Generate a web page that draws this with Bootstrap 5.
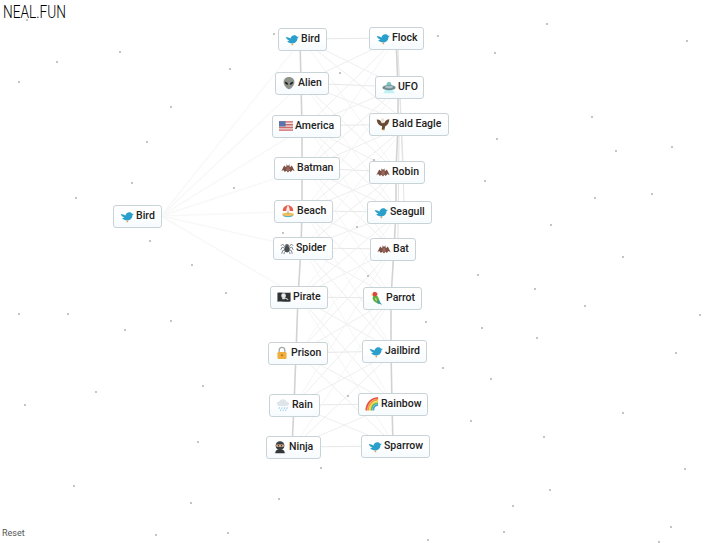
<!DOCTYPE html>
<html lang="en">
<head>
    <meta charset="UTF-8">
    <title>Infinite Craft</title>
    <link href="https://cdn.jsdelivr.net/npm/bootstrap@5.3.3/dist/css/bootstrap.min.css" rel="stylesheet">
    <style>
        body {
            background-color: #fff;
            font-family: Roboto, "Liberation Sans", sans-serif;
        }

        .craft-board {
            width: 720px;
            height: 543px;
            overflow: hidden;
        }

        .craft-lines {
            left: 0;
            top: 0;
        }

        .site-logo {
            left: 3px;
            top: -2px;
            font-size: 19px;
            font-weight: 300;
            color: #000;
            transform: scaleX(.72);
            transform-origin: left top;
        }

        .reset-link {
            left: 2px;
            bottom: 3px;
            font-size: 9px;
            color: #555;
        }

        .craft-node {
            height: 23px;
            padding: 0 0 1px 6px;
            gap: 2px;
            font-size: 10.5px;
            font-weight: 500;
            color: #222;
            white-space: nowrap;
            background: linear-gradient(180deg, #fff 40%, #f6fbfe 100%);
            border: 1px solid #c8d3d7;
            border-radius: 3px;
        }

        .craft-node svg {
            width: 14px;
            height: 14px;
            flex: none;
        }
    </style>
</head>
<body>

<!-- emoji drawn by hand, no emoji font in the sandbox -->
<svg width="0" height="0" class="position-absolute">
    <symbol id="e-bird" viewBox="0 0 16 16">
        <path d="M.8 5.800c2.200.2 4 .8 5.500 1.700.3-2.200 2.100-3.800 4.200-3.800 1.400 0 2.500.6 3.200 1.600l2.300.1-1.800 1.600c0 3.600-2.700 6-6.200 6-2.300 0-4.300-.9-5.500-2.400l2.500-.6C3.100 9.300 1.500 7.800.8 5.800z" fill="#2a9fcc"/>
        <path d="M7.800 13.300l-.4 1.900h2l-.3-1.900z" fill="#e3a33f"/>
    </symbol>
    <symbol id="e-alien" viewBox="0 0 16 16">
        <path d="M8 1C4.200 1 1.800 3.500 1.800 6.800 1.800 10.500 5.500 15 8 15s6.200-4.500 6.200-8.200C14.200 3.500 11.800 1 8 1z" fill="#8f938c"/>
        <path d="M3.300 6.600c2 0 3.700 1.300 3.800 3.300-2.100.2-3.900-1.100-3.800-3.300zM12.700 6.600c-2 0-3.700 1.300-3.800 3.300 2.100.2 3.900-1.100 3.800-3.300z" fill="#1f2320"/>
    </symbol>
    <symbol id="e-ufo" viewBox="0 0 16 16">
        <path d="M4 11l-2.500 4h13L12 11z" fill="#bff0f2"/>
        <path d="M5 6.500C5 3.500 6.500 2 8 2s3 1.500 3 4.500z" fill="#7fc4c4"/>
        <ellipse cx="8" cy="8.800" rx="7.500" ry="3" fill="#6f8d92"/>
        <ellipse cx="8" cy="8" rx="4.500" ry="1.500" fill="#a8c4c6"/>
    </symbol>
    <symbol id="e-flag" viewBox="0 0 16 16">
        <rect y="2.500" width="16" height="11" fill="#f0dedd"/>
        <path d="M0 2.500h16v1.600H0zM0 5.700h16v1.600H0zM0 8.900h16v1.600H0zM0 12h16v1.500H0z" fill="#cf6a68"/>
        <rect y="2.500" width="7.500" height="6" fill="#5a74ad"/>
    </symbol>
    <symbol id="e-eagle" viewBox="0 0 16 16">
        <path d="M.8 3c2.700-.2 4.700 1.300 5.500 3.500h3.400c.9-2.400 2.900-4 5.500-4-.1 3.800-1.700 6.800-4.700 8L9.500 15l-3-.5.500-4C3.500 10 1.300 7 .8 3z" fill="#6b4a34"/>
        <path d="M5.800 3.500c0-1.400 1.100-2.200 2.300-1.900 1 .2 1.300 1 1.100 1.800l1.100.7-1.300.1-.3 2.600-2.100.2z" fill="#e9e3d6"/>
        <path d="M6.500 14.500l2.500.8.500-1.500z" fill="#e0a63a"/>
    </symbol>
    <symbol id="e-bat" viewBox="0 0 16 16">
        <path d="M.4 11.800L3.600 5l2.200 2 .8-3.200 1 1.500h.8l1-1.500.8 3.200L12.400 5l3.200 6.800-2.500-1.500-1.900 2.300-1.700-1.600L8 13.200l-1.900-2.200-1.700 1.600-1.900-2.300z" fill="#7d5046"/>
        <path d="M6.500 6.500h3l.5 4L8 12.500l-2-2z" fill="#96695d"/>
    </symbol>
    <symbol id="e-beach" viewBox="0 0 16 16">
        <path d="M1.500 11C3 9.500 13 9.500 14.500 11c.5 2.500-1.500 3.800-6.500 3.800S1 13.500 1.500 11z" fill="#f0c060"/>
        <path d="M2 12.500c3 1.500 9 1.500 12 0-.6 1.500-2.500 2.300-6 2.300S2.600 14 2 12.500z" fill="#4fb5d8"/>
        <path d="M2 8C2 4 5 1.500 8 1.500S14 4 14 8z" fill="#e85c4f"/>
        <path d="M6 8c0-3 1-5 2-6.500C9 3 10 5 10 8z" fill="#f6efe8"/>
        <path d="M7.600 8h.8v3h-.8z" fill="#9a7a58"/>
    </symbol>
    <symbol id="e-spider" viewBox="0 0 16 16">
        <g stroke="#6a7074" stroke-width="1" fill="none">
            <path d="M6 7L3 3.500 1 5.500M6 8.500L2.500 7 1 10M6 10l-3 1-1 3.500M7 11l-2 2-.5 2M10 7l3-3.500 2 2M10 8.500L13.500 7 15 10M10 10l3 1 1 3.500M9 11l2 2 .5 2"/>
        </g>
        <circle cx="8" cy="5.500" r="2.200" fill="#5a5f64"/>
        <ellipse cx="8" cy="9.500" rx="3" ry="3.500" fill="#474c50"/>
    </symbol>
    <symbol id="e-pirate" viewBox="0 0 16 16">
        <path d="M.5 3c5-.8 10 .6 15-.2v10.400c-5 .8-10-.6-15 .2z" fill="#2f3336"/>
        <circle cx="7.500" cy="6.500" r="2.700" fill="#e8e8e8"/>
        <path d="M6 8.500h3v2H6zM9.500 8.500l3.500 2-.5 1-3.500-2z" fill="#e8e8e8"/>
    </symbol>
    <symbol id="e-parrot" viewBox="0 0 16 16">
        <path d="M3.500 6c2-2 5-1 6 1.500l2.500 6-2 1.500-5-3C3 10.500 2.500 7.500 3.500 6z" fill="#55b348"/>
        <path d="M2.800 4c0-2 1.500-3.200 3.200-3 1.700.2 2.800 1.600 2.500 3.500L6.300 6.200C4.800 6 2.800 5.700 2.800 4z" fill="#d8473c"/>
        <path d="M3 3L1.300 4.500l1.900 1.200z" fill="#e9b23f"/>
        <path d="M8.500 9l3 4.500 2 1.300-.5 1-4.500-2.800z" fill="#3c8fc2"/>
        <path d="M6 7.500c1.200 1 2 2.500 2.300 4.300L5.800 10z" fill="#e6d24a"/>
    </symbol>
    <symbol id="e-lock" viewBox="0 0 16 16">
        <path d="M4.800 7V4.800C4.800 3 6.200 1.500 8 1.500s3.200 1.500 3.200 3.300V7" fill="none" stroke="#a3a8ab" stroke-width="1.500"/>
        <rect x="2.800" y="6.800" width="10.400" height="8" rx="1.500" fill="#f2ae3a"/>
        <circle cx="8" cy="10.500" r="1.100" fill="#a8701c"/>
    </symbol>
    <symbol id="e-rain" viewBox="0 0 16 16">
        <path d="M4 9C2.300 9 1 8 1 6.500S2.300 4 3.800 4C4.500 2.500 6 1.500 8 1.500c2.200 0 3.800 1.300 4.200 2.800C13.800 4.300 15 5.300 15 6.700S13.800 9 12 9z" fill="#dfe5ea"/>
        <path d="M4 10.500l-.6 2M7 10.500l-.6 2M10 10.500l-.6 2M13 10.500l-.6 2M5.500 13l-.5 2M8.500 13l-.5 2M11.500 13l-.5 2" stroke="#8fc7e6" stroke-width="1" fill="none"/>
    </symbol>
    <symbol id="e-ninja" viewBox="0 0 16 16">
        <path d="M2.500 15c0-3 2-4.500 5.500-4.500s5.500 1.500 5.500 4.500z" fill="#33373a"/>
        <circle cx="8" cy="6.500" r="5" fill="#3a3e41"/>
        <rect x="3.600" y="5" width="8.800" height="2.600" rx="1" fill="#e2b48c"/>
        <circle cx="6.300" cy="6.300" r=".7" fill="#222"/>
        <circle cx="9.700" cy="6.300" r=".7" fill="#222"/>
    </symbol>
    <symbol id="e-rainbow" viewBox="0 0 16 16">
        <g fill="none" stroke-width="2">
            <path d="M1.500 15.500C1.500 8 6.500 1.500 15 1" stroke="#e9534a"/>
            <path d="M3.500 15.500C3.500 9 8 3.300 15 3" stroke="#f29a38"/>
            <path d="M5.500 15.500C5.500 10 9 5.300 15 5" stroke="#f5d54a"/>
            <path d="M7.500 15.500C7.500 11 10 7.300 15 7" stroke="#5fbf5a"/>
            <path d="M9.500 15.500C9.500 12 11 9.300 15 9" stroke="#4a9fe0"/>
        </g>
    </symbol>
</svg>

<div class="craft-board position-relative" id="board">
    <svg class="craft-lines position-absolute" id="lines" width="720" height="543"></svg>
    <div class="site-logo position-absolute">NEAL.FUN</div>
    <div class="reset-link position-absolute">Reset</div>
</div>

<script src="https://cdn.jsdelivr.net/npm/bootstrap@5.3.3/dist/js/bootstrap.bundle.min.js"></script>
<script>
    // name, icon, x, y, width, x of the line running down the column
    const leftCol = [
        ['Bird', 'bird', 278, 28, 49, 300],
        ['Alien', 'alien', 275, 72, 54, 301],
        ['America', 'flag', 272, 115, 69, 302],
        ['Batman', 'bat', 274, 157, 66, 302],
        ['Beach', 'beach', 274, 200, 59, 302],
        ['Spider', 'spider', 273, 237, 60, 301],
        ['Pirate', 'pirate', 270, 286, 58, 298],
        ['Prison', 'lock', 268, 342, 60, 296],
        ['Rain', 'rain', 269, 394, 51, 294],
        ['Ninja', 'ninja', 266, 436, 55, 292]
    ];
    const rightCol = [
        ['Flock', 'bird', 369, 27, 55, 396],
        ['UFO', 'ufo', 375, 76, 49, 398],
        ['Bald Eagle', 'eagle', 369, 113, 80, 398],
        ['Robin', 'bat', 369, 161, 56, 396],
        ['Seagull', 'bird', 367, 201, 65, 396],
        ['Bat', 'bat', 370, 238, 46, 394],
        ['Parrot', 'parrot', 363, 287, 59, 391],
        ['Jailbird', 'bird', 362, 340, 65, 391],
        ['Rainbow', 'rainbow', 358, 393, 70, 392],
        ['Sparrow', 'bird', 361, 435, 69, 393]
    ];
    const farBird = ['Bird', 'bird', 113, 205, 49];

    const stars = [
        [27,20],[120,52],[57,62],[19,82],[230,69],[171,107],[147,142],[132,183],[234,188],[76,198],
        [150,241],[192,265],[226,293],[19,314],[68,314],[125,330],[171,321],[203,386],[96,392],[25,405],
        [198,442],[74,486],[191,503],[156,535],[228,533],[547,24],[495,53],[687,41],[592,117],[497,139],
        [616,151],[672,147],[485,181],[595,198],[652,194],[551,225],[623,257],[478,275],[535,289],[585,306],
        [700,315],[482,328],[537,338],[676,353],[443,368],[491,379],[623,413],[471,421],[544,437],[685,469],
        [550,490],[513,506],[504,532],[671,527],[659,542],[321,468],[279,499],[428,540],[274,34],[438,36],
        [340,73],[374,160],[357,227],[368,276],[283,233],[426,322],[348,396]
    ];

    const board = document.getElementById('board');
    const lines = document.getElementById('lines');
    const NS = 'http://www.w3.org/2000/svg';

    function addLine(x1, y1, x2, y2, color, width) {
        const l = document.createElementNS(NS, 'line');
        l.setAttribute('x1', x1);
        l.setAttribute('y1', y1);
        l.setAttribute('x2', x2);
        l.setAttribute('y2', y2);
        l.setAttribute('stroke', color);
        l.setAttribute('stroke-width', width);
        lines.appendChild(l);
    }

    function addNode(n) {
        const el = document.createElement('div');
        el.className = 'craft-node position-absolute d-flex align-items-center';
        el.style.left = n[2] + 'px';
        el.style.top = n[3] + 'px';
        el.style.width = n[4] + 'px';
        el.innerHTML = '<svg><use href="#e-' + n[1] + '"></use></svg><span>' + n[0] + '</span>';
        board.appendChild(el);
    }

    const midY = n => n[3] + 11;
    const midX = n => n[2] + n[4] / 2;

    // far bird fans out to the upper part of the left column, the rest is too faint to see
    leftCol.slice(0, 7).forEach(n => addLine(161, 216, midX(n), midY(n), '#f8f8f8', 1.5));

    // crossing lines between the two columns
    leftCol.forEach((a, i) => {
        rightCol.forEach((b, j) => {
            const d = Math.abs(i - j);
            if (d > 0 && d < 4) addLine(midX(a), midY(a), midX(b), midY(b), d < 3 ? '#efefef' : '#f5f5f5', 1);
        });
        addLine(midX(a), midY(a), midX(rightCol[i]), midY(rightCol[i]), '#e8e8e8', 1);
    });

    // extra lines hugging the top of the right column
    addLine(398, 50, 403, 161, '#e2e2e2', 1);
    addLine(400, 98, 404, 201, '#e4e4e4', 1);
    addLine(399, 135, 398, 238, '#e2e2e2', 1);

    // the two column spines
    [leftCol, rightCol].forEach(col => {
        col.forEach((n, i) => {
            if (i) addLine(col[i - 1][5], midY(col[i - 1]), n[5], midY(n), '#d2d2d2', 1.6);
        });
    });

    stars.forEach(s => {
        const c = document.createElementNS(NS, 'circle');
        c.setAttribute('cx', s[0]);
        c.setAttribute('cy', s[1]);
        c.setAttribute('r', 0.9);
        c.setAttribute('fill', '#a9a9a9');
        lines.appendChild(c);
    });

    leftCol.concat(rightCol, [farBird]).forEach(addNode);
</script>

</body>
</html>
